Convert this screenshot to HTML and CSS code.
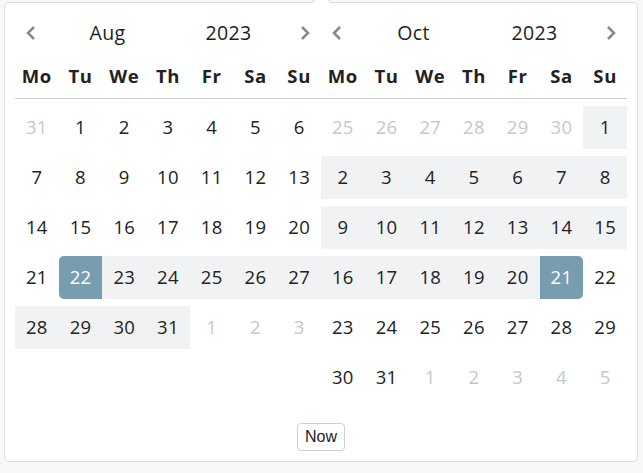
FILE: index.html
```html
<!DOCTYPE html>
<html lang="en">
<head>
    <meta charset="UTF-8">
    <title>Date range</title>
    <link rel="stylesheet" href="styles.css">
</head>
<body>
    <div class="picker">
        <div class="picker-tip"></div>
        <div class="calendars">
            <div class="calendar">
                <div class="cal-header">
                    <button class="nav-btn"><svg width="12" height="16" viewBox="0 0 12 16"><polyline points="9,2 3,8 9,14" fill="none" stroke="#8a8a8a" stroke-width="2.6"/></svg></button>
                    <div class="cal-title">Aug</div>
                    <div class="cal-title">2023</div>
                    <button class="nav-btn"><svg width="12" height="16" viewBox="0 0 12 16"><polyline points="3,2 9,8 3,14" fill="none" stroke="#8a8a8a" stroke-width="2.6"/></svg></button>
                </div>
                <div class="weekdays">
                    <div>Mo</div><div>Tu</div><div>We</div><div>Th</div><div>Fr</div><div>Sa</div><div>Su</div>
                </div>
                <div class="days">
                    <div class="day muted">31</div><div class="day">1</div><div class="day">2</div><div class="day">3</div><div class="day">4</div><div class="day">5</div><div class="day">6</div>
                    <div class="day">7</div><div class="day">8</div><div class="day">9</div><div class="day">10</div><div class="day">11</div><div class="day">12</div><div class="day">13</div>
                    <div class="day">14</div><div class="day">15</div><div class="day">16</div><div class="day">17</div><div class="day">18</div><div class="day">19</div><div class="day">20</div>
                    <div class="day">21</div><div class="day range-start">22</div><div class="day in-range">23</div><div class="day in-range">24</div><div class="day in-range">25</div><div class="day in-range">26</div><div class="day in-range">27</div>
                    <div class="day in-range">28</div><div class="day in-range">29</div><div class="day in-range">30</div><div class="day in-range">31</div><div class="day muted">1</div><div class="day muted">2</div><div class="day muted">3</div>
                </div>
            </div>
            <div class="calendar">
                <div class="cal-header">
                    <button class="nav-btn"><svg width="12" height="16" viewBox="0 0 12 16"><polyline points="9,2 3,8 9,14" fill="none" stroke="#8a8a8a" stroke-width="2.6"/></svg></button>
                    <div class="cal-title">Oct</div>
                    <div class="cal-title">2023</div>
                    <button class="nav-btn"><svg width="12" height="16" viewBox="0 0 12 16"><polyline points="3,2 9,8 3,14" fill="none" stroke="#8a8a8a" stroke-width="2.6"/></svg></button>
                </div>
                <div class="weekdays">
                    <div>Mo</div><div>Tu</div><div>We</div><div>Th</div><div>Fr</div><div>Sa</div><div>Su</div>
                </div>
                <div class="days">
                    <div class="day muted">25</div><div class="day muted">26</div><div class="day muted">27</div><div class="day muted">28</div><div class="day muted">29</div><div class="day muted">30</div><div class="day in-range">1</div>
                    <div class="day in-range">2</div><div class="day in-range">3</div><div class="day in-range">4</div><div class="day in-range">5</div><div class="day in-range">6</div><div class="day in-range">7</div><div class="day in-range">8</div>
                    <div class="day in-range">9</div><div class="day in-range">10</div><div class="day in-range">11</div><div class="day in-range">12</div><div class="day in-range">13</div><div class="day in-range">14</div><div class="day in-range">15</div>
                    <div class="day in-range">16</div><div class="day in-range">17</div><div class="day in-range">18</div><div class="day in-range">19</div><div class="day in-range">20</div><div class="day range-end">21</div><div class="day">22</div>
                    <div class="day">23</div><div class="day">24</div><div class="day">25</div><div class="day">26</div><div class="day">27</div><div class="day">28</div><div class="day">29</div>
                    <div class="day">30</div><div class="day">31</div><div class="day muted">1</div><div class="day muted">2</div><div class="day muted">3</div><div class="day muted">4</div><div class="day muted">5</div>
                </div>
            </div>
        </div>
        <div class="picker-footer">
            <button class="now-btn">Now</button>
        </div>
    </div>
</body>
</html>
```

FILE: styles.css
```css
* {
    margin: 0;
    padding: 0;
    box-sizing: border-box;
}

body {
    background: #f8f8f8;
    font-family: 'Open Sans', 'Liberation Sans', sans-serif;
    color: #222;
    overflow: hidden;
}

.picker {
    position: relative;
    width: 634px;
    margin: 2px 0 0 4px;
    padding: 8px 10px 10px 10px;
    background: #fff;
    border: 1px solid #dcdcdc;
    border-radius: 5px;
}

.picker-tip {
    position: absolute;
    top: -8px;
    left: 310px;
    width: 13px;
    height: 13px;
    background: #fff;
    border-top: 1px solid #dcdcdc;
    border-left: 1px solid #dcdcdc;
    transform: rotate(45deg);
}

.calendars {
    display: flex;
}

.calendar {
    flex: 1;
}

.cal-header {
    display: flex;
    align-items: center;
    height: 44px;
}

.nav-btn {
    width: 32px;
    height: 32px;
    border: none;
    background: transparent;
    display: flex;
    align-items: center;
    justify-content: center;
}

.cal-title {
    flex: 1;
    text-align: center;
    font-size: 19.5px;
    line-height: 42px;
    letter-spacing: 0.3px;
}

.weekdays {
    display: grid;
    grid-template-columns: repeat(7, 1fr);
    height: 44px;
    line-height: 42px;
    border-bottom: 1px solid #d0d0d0;
    font-size: 18.5px;
    font-weight: 700;
    letter-spacing: 0.6px;
    text-align: center;
}

.days {
    display: grid;
    grid-template-columns: repeat(7, 1fr);
    grid-template-rows: repeat(6, 43px);
    row-gap: 7px;
    margin-top: 7px;
}

.day {
    height: 43px;
    line-height: 41px;
    text-align: center;
    font-size: 18.5px;
    letter-spacing: 0.3px;
}

.day.muted {
    color: #c4c8cf;
}

.day.in-range {
    background: #f1f2f4;
}

.day.range-start,
.day.range-end {
    background: #789db0;
    color: #fff;
}

.day.range-start {
    border-radius: 5px 0 0 5px;
}

.day.range-end {
    border-radius: 0 5px 5px 0;
}

.picker-footer {
    display: flex;
    justify-content: center;
    margin-top: 24px;
}

.now-btn {
    height: 28px;
    padding: 0 7px;
    background: #fff;
    border: 1px solid #cfcfcf;
    border-radius: 4px;
    font-family: 'Liberation Sans', Arial, sans-serif;
    font-size: 16px;
    color: #222;
}
```
